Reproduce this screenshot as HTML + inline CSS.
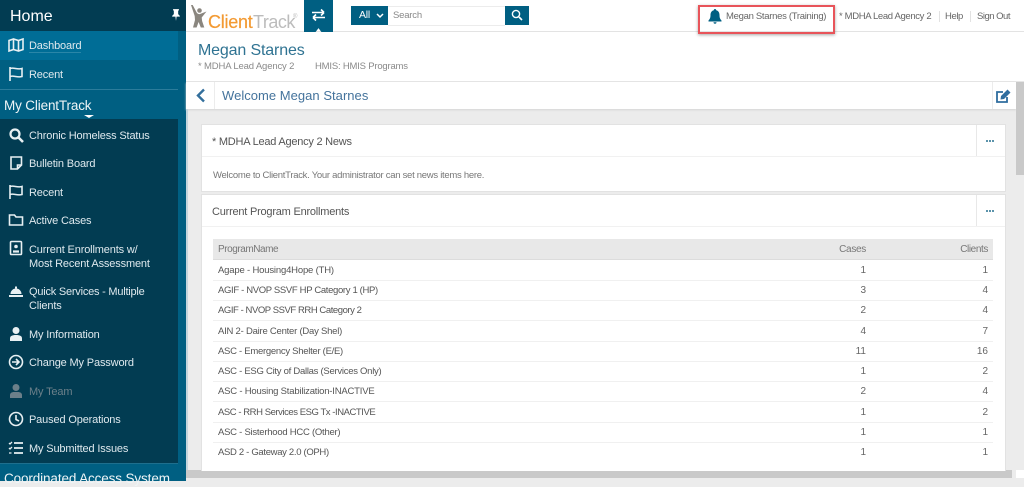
<!DOCTYPE html>
<html><head><meta charset="utf-8"><title>ClientTrack</title>
<style>
html,body{margin:0;padding:0;width:1024px;height:481px;overflow:hidden;background:#ececec;font-family:"Liberation Sans",sans-serif;color:#555}
.a{position:absolute;white-space:nowrap}
.abs{position:absolute}
.nav{position:absolute;left:29px;color:#dfe9ee;font-size:11px;line-height:14px;white-space:nowrap;letter-spacing:-.15px}
svg.i{position:absolute;left:8px;width:16px;height:16px;fill:none;stroke:#e8f0f3;stroke-width:1.6}
svg.f{fill:#e8f0f3;stroke:none}
.top{position:absolute;top:10px;font-size:9.5px;line-height:13px;color:#666;white-space:nowrap}
.sub{position:absolute;top:60px;font-size:9.5px;line-height:13px;color:#8a8a8a;white-space:nowrap}
.row{position:absolute;left:213px;width:780px;height:20px;border-bottom:1px solid #f0f0f0;font-size:9.5px;color:#555}
.row span{position:absolute;top:4px;line-height:13px;white-space:nowrap}
.n{left:5px}
.c{right:127px;color:#666;font-size:10px}
.d{right:5px;color:#666;font-size:10px}
.dots{position:absolute;left:986px;width:8px;height:2px;background:repeating-linear-gradient(90deg,#5b93ab 0 2px,transparent 2px 3px)}
</style></head><body>

<!-- sidebar -->
<div class="abs" style="left:0;top:0;width:186px;height:481px;background:#005f82"></div>
<div class="abs" style="left:0;top:0;width:186px;height:31px;background:#023c52"></div>
<div class="abs" style="left:0;top:31px;width:178px;height:29px;background:#006d96"></div>
<div class="abs" style="left:0;top:89px;width:178px;height:1px;background:#2b7c9b"></div>
<div class="abs" style="left:0;top:119px;width:178px;height:344px;background:#023c52"></div>
<div class="abs" style="left:0;top:463px;width:178px;height:1px;background:#1e6f8d"></div>
<div class="a" style="left:10px;top:8px;font-size:16px;line-height:18px;color:#fff">Home</div>
<svg class="abs" style="left:171px;top:9px" width="10" height="12" viewBox="0 0 12 14"><path fill="#fff" d="M2.500 0h7v1.200L8.600 2v4l2 2v1H6.700L6 14l-.7-5H1.400V8l2-2V2l-.9-.8z"/></svg>

<svg class="i" style="top:37px" viewBox="0 0 16 16"><path d="M1 3.500 5.500 2l5 1.500L15 2v10.500L10.500 14l-5-1.500L1 14zM5.500 2v10.500M10.500 3.500V14"/></svg>
<div class="nav" style="top:39px">Dashboard</div>
<div class="abs" style="left:29px;top:52px;width:52px;height:1px;background:#2a86a8"></div>
<svg class="i" style="top:66px" viewBox="0 0 16 16"><path d="M2 1v14M2 2.500c4-1.500 7 1.500 12 0v8c-5 1.500-8-1.500-12 0"/></svg>
<div class="nav" style="top:68px">Recent</div>

<div class="a" style="left:4px;top:98px;font-size:13.500px;line-height:16px;color:#eef5f7;letter-spacing:-.15px">My ClientTrack</div>
<div class="abs" style="left:84px;top:115px;width:0;height:0;border-left:5px solid transparent;border-right:5px solid transparent;border-top:3px solid #fff"></div>

<svg class="i" style="top:127px" viewBox="0 0 16 16"><circle cx="7" cy="7" r="4.500" stroke-width="2.200"/><path d="M10.500 10.500 15 15" stroke-width="2.600"/></svg>
<div class="nav" style="top:129px">Chronic Homeless Status</div>
<svg class="i" style="top:155px" viewBox="0 0 16 16"><path d="M3 2h10.500v8l-4 4H3zM13.500 10h-4v4"/></svg>
<div class="nav" style="top:157px">Bulletin Board</div>
<svg class="i" style="top:184px" viewBox="0 0 16 16"><path d="M2 1v14M2 2.500c4-1.500 7 1.500 12 0v8c-5 1.500-8-1.500-12 0"/></svg>
<div class="nav" style="top:186px">Recent</div>
<svg class="i" style="top:212px" viewBox="0 0 16 16"><path d="M1.500 3h5l1.500 2h6.500v8h-13z"/></svg>
<div class="nav" style="top:214px">Active Cases</div>
<svg class="i" style="top:240px" viewBox="0 0 16 16"><rect x="2.500" y="1.500" width="11" height="13" rx="1"/><circle cx="8" cy="6.500" r="1.800" fill="#e8f0f3" stroke="none"/><path d="M5 11.500h6" stroke-width="2.200"/></svg>
<div class="nav" style="top:243px">Current Enrollments w/</div>
<div class="nav" style="top:257px">Most Recent Assessment</div>
<svg class="i f" style="top:283px" viewBox="0 0 16 16"><path d="M2.500 11a5.500 5.500 0 0 1 11 0zM1 12h14v2H1zM7 3.500h2v2H7z"/></svg>
<div class="nav" style="top:285px;letter-spacing:-.22px">Quick Services - Multiple</div>
<div class="nav" style="top:299px">Clients</div>
<svg class="i f" style="top:326px" viewBox="0 0 16 16"><circle cx="8" cy="4.500" r="3.500"/><path d="M2 15v-2.500C2 10 4 9 8 9s6 1 6 3.500V15z"/></svg>
<div class="nav" style="top:328px">My Information</div>
<svg class="i" style="top:354px" viewBox="0 0 16 16"><circle cx="8" cy="8" r="6.500"/><path d="M4 8h7M8 5l3 3-3 3"/></svg>
<div class="nav" style="top:356px">Change My Password</div>
<svg class="i f" style="top:383px;fill:#6b7f89" viewBox="0 0 16 16"><circle cx="8" cy="4.500" r="3.500"/><path d="M2 15v-3c0-2 2-3 4-3h4c2 0 4 1 4 3v3z"/></svg>
<div class="nav" style="top:385px;color:#6c808a">My Team</div>
<svg class="i" style="top:411px" viewBox="0 0 16 16"><circle cx="8" cy="8" r="6.500"/><path d="M8 4v4.500l3 1.500"/></svg>
<div class="nav" style="top:413px">Paused Operations</div>
<svg class="i" style="top:440px" viewBox="0 0 16 16"><path d="M6 3h9M6 8h9M6 13h9" stroke-width="1.800"/><path d="M1 3l1 1 2-2M1 8l1 1 2-2M1 13h2.500" stroke-width="1.300"/></svg>
<div class="nav" style="top:442px">My Submitted Issues</div>
<div class="a" style="left:4px;top:471px;font-size:13.500px;line-height:16px;color:#eef5f7;letter-spacing:-.12px">Coordinated Access System</div>

<!-- main white bands -->
<div class="abs" style="left:186px;top:0;width:838px;height:31px;background:#fff;border-bottom:1px solid #e3e3e3"></div>
<div class="abs" style="left:186px;top:32px;width:838px;height:49px;background:#fff;border-bottom:1px solid #e6e6e6"></div>
<div class="abs" style="left:186px;top:82px;width:830px;height:27px;background:#fff;box-shadow:0 1px 2px #d4d4d4"></div>
<div class="abs" style="left:186px;top:109px;width:2px;height:361px;background:#c3d6de"></div>

<!-- logo -->
<svg class="abs" style="left:191px;top:4px" width="17" height="25" viewBox="0 0 17 25"><path fill="#8a867f" d="M0 1h1.700L5.800 8.800Q7 10.500 9 10l6.500-2.500-4.800 6 .4 3.500 2.200 6.500H9.800L7.600 18l-2 5.500H2L4 16l-.3-4z"/><circle cx="8.500" cy="6.500" r="2.300" fill="#8a867f"/></svg>
<div class="a" style="left:208px;top:12px;font-size:18px;line-height:20px;color:#f39a32;letter-spacing:-.25px;-webkit-text-stroke:.2px #f39a32">Client</div>
<div class="a" style="left:253px;top:12px;font-size:18px;line-height:20px;color:#bcbcbc;letter-spacing:-.5px">Track</div>
<div class="a" style="left:293px;top:14px;font-size:6px;line-height:7px;color:#bcbcbc">®</div>

<!-- swap button -->
<div class="abs" style="left:304px;top:0;width:29px;height:32px;background:#005f82;clip-path:polygon(0 0,100% 0,100% 100%,60% 100%,50% 88%,40% 100%,0 100%)"></div>
<svg class="abs" style="left:311px;top:8px" width="15" height="14" viewBox="0 0 15 14"><path fill="none" stroke="#fff" stroke-width="1.600" d="M1 4.500h12M10 1.500l3 3M14 9.500H2M5 6.500l-3 3M2 9.500l3 3M13 4.500l-3 3"/></svg>

<!-- search -->
<div class="abs" style="left:351px;top:6px;width:37px;height:19px;background:#005f82"></div>
<div class="a" style="left:359px;top:9px;font-size:10.500px;line-height:13px;color:#fff;letter-spacing:-.2px">All</div>
<svg class="abs" style="left:376px;top:13px" width="8" height="6" viewBox="0 0 8 6"><path fill="none" stroke="#fff" stroke-width="1.500" d="M1 1l3 3 3-3"/></svg>
<div class="abs" style="left:388px;top:6px;width:117px;height:18px;border-top:1px solid #ececec;border-bottom:1px solid #ececec"></div>
<div class="a" style="left:393px;top:9px;font-size:9.500px;line-height:13px;color:#888;letter-spacing:-.2px">Search</div>
<div class="abs" style="left:505px;top:6px;width:24px;height:19px;background:#005f82"></div>
<svg class="abs" style="left:511px;top:9px" width="12" height="12" viewBox="0 0 12 12"><circle cx="5" cy="5" r="3.600" fill="none" stroke="#fff" stroke-width="1.400"/><path d="M8 8l3 3" stroke="#fff" stroke-width="1.600"/></svg>

<!-- top right -->
<div class="abs" style="left:698px;top:5px;width:133px;height:25px;border:2px solid #e8545a;box-shadow:0 1px 3px rgba(0,0,0,.35)"></div>
<svg class="abs" style="left:708px;top:9px" width="14" height="15" viewBox="0 0 14 15"><path fill="#005f82" d="M7 0c.8 0 1.200.5 1.200 1.200C10.500 1.800 11.500 3.500 11.500 6c0 3 .8 4.200 2 5.500V12.500H.5v-1C1.700 10.200 2.500 9 2.500 6c0-2.500 1-4.200 3.300-4.800C5.800.5 6.200 0 7 0zM5.500 13.300h3a1.500 1.500 0 0 1-3 0z"/></svg>
<div class="top" style="left:726px;letter-spacing:-.3px">Megan Starnes (Training)</div>
<div class="top" style="left:839px;letter-spacing:-.35px">* MDHA Lead Agency 2</div>
<div class="abs" style="left:939px;top:11px;width:1px;height:11px;background:#e2e2e2"></div>
<div class="top" style="left:945px;letter-spacing:-.4px">Help</div>
<div class="abs" style="left:970px;top:11px;width:1px;height:11px;background:#e2e2e2"></div>
<div class="top" style="left:977px;letter-spacing:-.5px">Sign Out</div>

<!-- header -->
<div class="a" style="left:198px;top:42px;font-size:16px;line-height:18px;color:#2f7392;letter-spacing:-.15px">Megan Starnes</div>
<div class="sub" style="left:198px;letter-spacing:-.15px">* MDHA Lead Agency 2</div>
<div class="sub" style="left:315px;letter-spacing:-.2px">HMIS: HMIS Programs</div>

<!-- title bar -->
<svg class="abs" style="left:195px;top:88px" width="11" height="15" viewBox="0 0 11 15"><path fill="none" stroke="#336f9c" stroke-width="2.400" d="M9 1.500 3 7.500l6 6"/></svg>
<div class="abs" style="left:214px;top:82px;width:1px;height:27px;background:#ececec"></div>
<div class="a" style="left:222px;top:88px;font-size:13px;line-height:16px;color:#44739c;letter-spacing:.03px">Welcome Megan Starnes</div>
<div class="abs" style="left:992px;top:82px;width:1px;height:27px;background:#ececec"></div>
<svg class="abs" style="left:996px;top:89px" width="16" height="14" viewBox="0 0 16 14"><path fill="none" stroke="#2f6d9f" stroke-width="1.800" d="M11 8v5H1V3h6"/><path fill="#2f6d9f" d="M5 7l6.500-6.500L14.500 3.500 8 10l-3.500.5zM12.500 0l3 3"/></svg>

<!-- scrollbars -->
<div class="abs" style="left:1016px;top:82px;width:8px;height:93px;background:#c9c9c9"></div>
<div class="abs" style="left:186px;top:470px;width:826px;height:8px;background:#c9c9c9"></div>
<div class="abs" style="left:1016px;top:470px;width:8px;height:8px;background:#fff"></div>
<div class="abs" style="left:186px;top:478px;width:838px;height:3px;background:#ececec"></div>

<!-- card 1 -->
<div class="abs" style="left:201px;top:124px;width:803px;height:66px;background:#fff;border:1px solid #e2e2e2"></div>
<div class="abs" style="left:202px;top:156px;width:803px;height:1px;background:#f1f1f1"></div>
<div class="abs" style="left:976px;top:125px;width:1px;height:31px;background:#e8e8e8"></div>
<div class="dots" style="top:140px"></div>
<div class="a" style="left:212px;top:135px;font-size:11px;line-height:14px;color:#555;letter-spacing:-.23px">* MDHA Lead Agency 2 News</div>
<div class="a" style="left:213px;top:170px;font-size:9.500px;line-height:12px;color:#777;letter-spacing:-.28px">Welcome to ClientTrack. Your administrator can set news items here.</div>

<!-- card 2 -->
<div class="abs" style="left:201px;top:194px;width:803px;height:276px;background:#fff;border:1px solid #e2e2e2;border-bottom:0"></div>
<div class="abs" style="left:202px;top:226px;width:803px;height:1px;background:#f1f1f1"></div>
<div class="abs" style="left:976px;top:195px;width:1px;height:31px;background:#e8e8e8"></div>
<div class="dots" style="top:210px"></div>
<div class="a" style="left:212px;top:205px;font-size:11px;line-height:14px;color:#555;letter-spacing:-.22px">Current Program Enrollments</div>

<!-- table -->
<div class="abs" style="left:213px;top:239px;width:780px;height:20px;background:#e8e8e8;border-bottom:1px solid #dcdcdc"></div>
<div class="a" style="left:218px;top:243px;font-size:10px;line-height:13px;color:#777;letter-spacing:-.45px">ProgramName</div>
<div class="a" style="right:158px;top:243px;font-size:10px;line-height:13px;color:#777;letter-spacing:-.3px">Cases</div>
<div class="a" style="right:36px;top:243px;font-size:10px;line-height:13px;color:#777;letter-spacing:-.4px">Clients</div>

<div class="row" style="top:260px"><span class="n" style="letter-spacing:-.18px">Agape - Housing4Hope (TH)</span><span class="c">1</span><span class="d">1</span></div>
<div class="row" style="top:280px"><span class="n" style="letter-spacing:-.34px">AGIF - NVOP SSVF HP Category 1 (HP)</span><span class="c">3</span><span class="d">4</span></div>
<div class="row" style="top:300px"><span class="n" style="letter-spacing:-.44px">AGIF - NVOP SSVF RRH Category 2</span><span class="c">2</span><span class="d">4</span></div>
<div class="row" style="top:321px"><span class="n" style="letter-spacing:-.23px">AIN 2- Daire Center (Day Shel)</span><span class="c">4</span><span class="d">7</span></div>
<div class="row" style="top:341px"><span class="n" style="letter-spacing:-.28px">ASC - Emergency Shelter (E/E)</span><span class="c">11</span><span class="d">16</span></div>
<div class="row" style="top:361px"><span class="n" style="letter-spacing:-.27px">ASC - ESG City of Dallas (Services Only)</span><span class="c">1</span><span class="d">2</span></div>
<div class="row" style="top:381px"><span class="n" style="letter-spacing:-.2px">ASC - Housing Stabilization-INACTIVE</span><span class="c">2</span><span class="d">4</span></div>
<div class="row" style="top:402px"><span class="n" style="letter-spacing:-.45px">ASC - RRH Services ESG Tx -INACTIVE</span><span class="c">1</span><span class="d">2</span></div>
<div class="row" style="top:422px"><span class="n" style="letter-spacing:-.25px">ASC - Sisterhood HCC (Other)</span><span class="c">1</span><span class="d">1</span></div>
<div class="row" style="top:442px;border-bottom:0"><span class="n" style="letter-spacing:-.32px">ASD 2 - Gateway 2.0 (OPH)</span><span class="c">1</span><span class="d">1</span></div>

</body></html>
